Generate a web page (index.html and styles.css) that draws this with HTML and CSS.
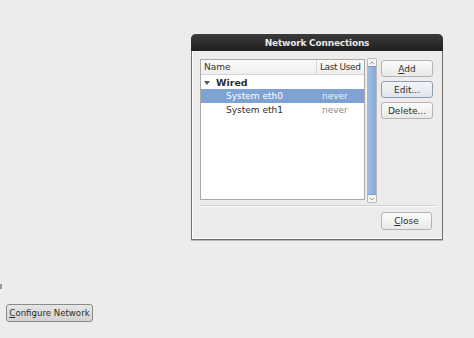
FILE: index.html
```html
<!DOCTYPE html>
<html>
<head>
<meta charset="utf-8">
<link rel="stylesheet" href="styles.css">
</head>
<body>
<div class="desk">
  <div class="dialog">
    <div class="titlebar">Network Connections</div>
    <div class="body">
      <div class="top">
        <div class="listwrap">
          <div class="list">
            <div class="hdr"><span class="c-name">Name</span><span class="c-last">Last Used</span></div>
            <div class="row group"><span class="tri"></span>Wired</div>
            <div class="row item sel"><span class="c-name">System eth0</span><span class="c-last">never</span></div>
            <div class="row item"><span class="c-name">System eth1</span><span class="c-last">never</span></div>
          </div>
          <div class="scroll">
            <div class="arrow up"><svg width="8" height="6" viewBox="0 0 8 6"><path d="M2 4 L4 2 L6 4" fill="none" stroke="#9a9a9a" stroke-width="1"/></svg></div>
            <div class="thumb"></div>
            <div class="arrow down"><svg width="8" height="6" viewBox="0 0 8 6"><path d="M2 2 L4 4 L6 2" fill="none" stroke="#9a9a9a" stroke-width="1"/></svg></div>
          </div>
        </div>
        <div class="btns">
          <button class="btn"><u>A</u>dd</button>
          <button class="btn hot">Edit...</button>
          <button class="btn">Delete...</button>
        </div>
      </div>
      <div class="sep"></div>
      <div class="bottom">
        <button class="btn close"><u>C</u>lose</button>
      </div>
    </div>
  </div>
  <div class="tick"></div>
  <button class="btn cfg"><u>C</u>onfigure Network</button>
</div>
</body>
</html>
```
FILE: styles.css
```css
html, body { margin: 0; padding: 0; }
body {
  width: 474px; height: 338px; overflow: hidden;
  background: #edecea;
  font-family: "DejaVu Sans", sans-serif;
  font-size: 9px;
  color: #2e2e2e;
}
.desk { position: relative; width: 474px; height: 338px; }
.dialog {
  position: absolute; left: 191px; top: 34px;
  width: 252px; height: 206px;
  box-sizing: border-box;
  border: 1px solid #6f6f6f;
  border-top: none;
  border-radius: 5px 5px 0 0;
  background: #edecea;
  box-shadow: inset 0 -1px 0 #ffffff, inset 1px 0 0 #ffffff, 0 1px 0 #b8b8b6;
  display: flex; flex-direction: column;
}
.titlebar {
  height: 17px;
  margin: 0 -1px;
  background: linear-gradient(#3b3b3b, #1f1f1f);
  border-radius: 5px 5px 0 0;
  color: #e6e6e6; font-weight: bold; font-size: 9px;
  letter-spacing: -0.2px;
  display: flex; align-items: center; justify-content: center;
}
.body { flex: 1; display: flex; flex-direction: column; padding: 7px 8px 0 8px; }
.top { display: flex; gap: 4px; }
.listwrap { display: flex; gap: 2px; }
.list {
  width: 165px; height: 141px; box-sizing: border-box;
  background: #fff; border: 1px solid #a9a9a7;
  margin-top: 1px;
  white-space: nowrap;
}
.hdr {
  height: 14px; display: flex; align-items: center;
  background: linear-gradient(#fbfbfb, #eeeeec);
  border-bottom: 1px solid #d6d6d4;
  color: #333;
}
.hdr .c-name { width: 112px; flex: none; padding-left: 3px; border-right: 1px solid #d6d6d4; height: 14px; line-height: 14px; }
.hdr .c-last { padding-left: 3px; letter-spacing: -0.4px; }
.row { height: 14px; display: flex; align-items: center; }
.group { font-weight: bold; padding-left: 3px; font-size: 9.5px; }
.tri {
  width: 0; height: 0; margin-right: 6px; margin-top: 1px;
  border-left: 3px solid transparent; border-right: 3px solid transparent;
  border-top: 4px solid #555;
}
.item .c-name { width: 96px; flex: none; padding-left: 25px; }
.item .c-last { color: #8a8a8a; }
.sel { background: #7fa2d2; color: #fff; }
.sel .c-last { color: #eef3fa; }
.scroll {
  width: 10px; height: 145px; box-sizing: border-box;
  display: flex; flex-direction: column;
  border: 1px solid #b9b9b7; border-radius: 2px;
  background: #e6e6e4;
}
.arrow { height: 7px; background: #f4f4f2; display: flex; align-items: center; justify-content: center; }
.thumb { flex: 1; background: linear-gradient(90deg, #9fbde4, #86a9d8); border-top: 1px solid #7a9cc9; border-bottom: 1px solid #7a9cc9; }
.btns { display: flex; flex-direction: column; gap: 4px; padding-top: 2px; }
.btn {
  font-family: "DejaVu Sans", sans-serif; font-size: 9px; color: #2e2e2e;
  height: 17px; padding: 0;
  border: 1px solid #b3b3b1; border-radius: 3px;
  background: linear-gradient(#fbfbfb, #e9e9e7);
  display: flex; align-items: center; justify-content: center;
  white-space: nowrap;
}
.btns .btn { width: 52px; }
.btns .hot { background: linear-gradient(#f3f5f9, #dfe4ec); border-color: #8f9db2; }
.sep { height: 0; border-top: 1px solid #d2d2d0; border-bottom: 1px solid #fafafa; margin: 2px -2px 0 0; }
.bottom { display: flex; justify-content: flex-end; padding: 5px 2px 0 0; }
.close { width: 51px; height: 18px; }
.tick { position: absolute; left: 0; top: 284px; width: 2px; height: 5px; background: #9a9a9a; }
.cfg {
  position: absolute; left: 6px; top: 304px;
  width: 87px; height: 18px;
  font-size: 8.6px;
  background: linear-gradient(#e6e6e4, #d2d2d0);
  border-color: #8a8a88;
}
```
